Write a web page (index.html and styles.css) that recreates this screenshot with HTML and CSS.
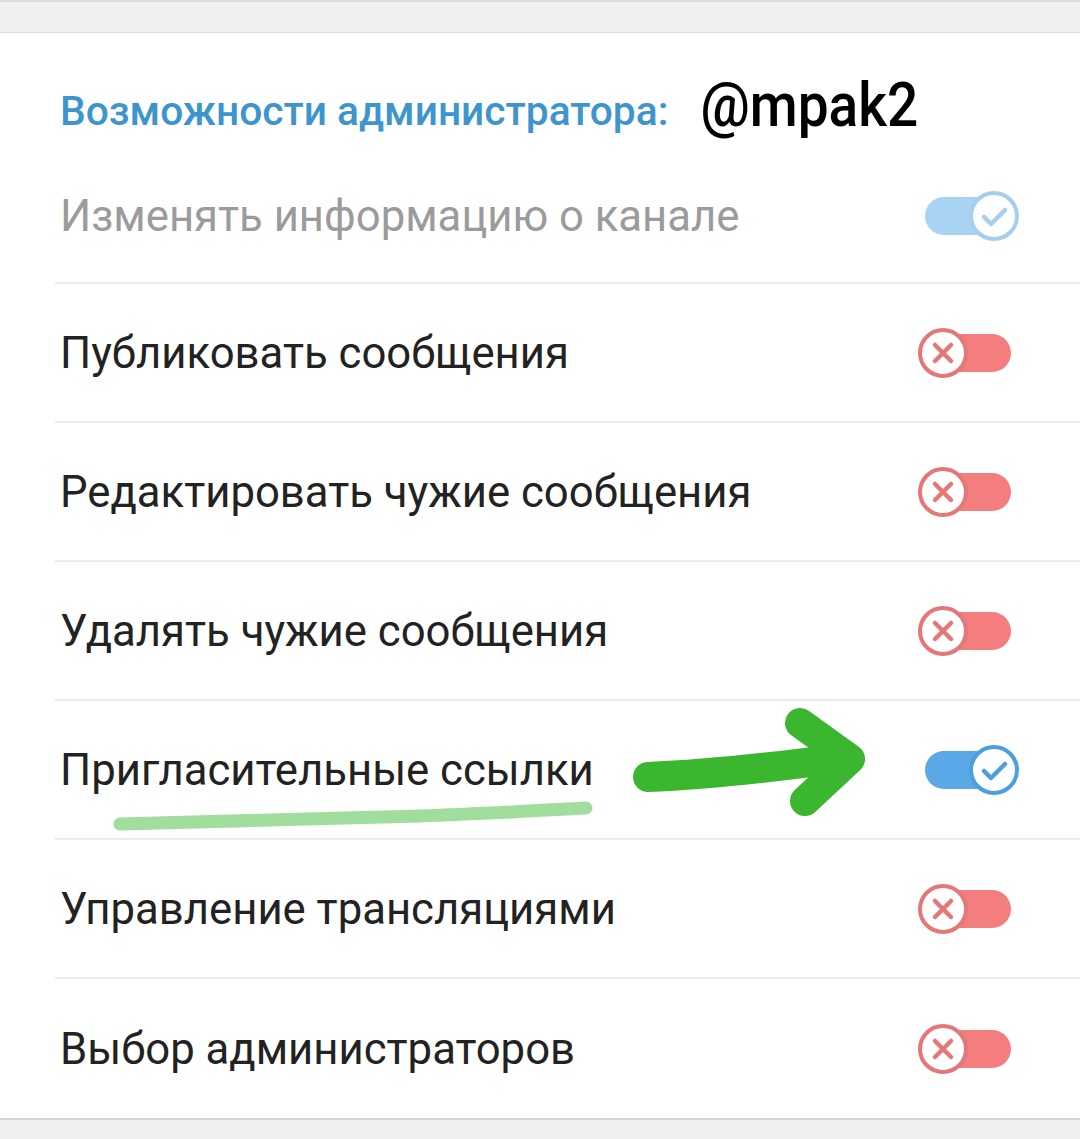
FILE: index.html
```html
<!DOCTYPE html>
<html lang="ru">
<head>
<meta charset="utf-8">
<link rel="stylesheet" href="styles.css">
</head>
<body>
<div class="topbar"></div>
<section class="card">
  <div class="header">
    <span class="title">Возможности администратора:</span>
    <span class="handle">@mpak2</span>
  </div>
  <div class="row first">
    <span class="label muted">Изменять информацию о канале</span>
    <span class="switch on dim"><span class="knob"><svg viewBox="0 0 50 50"><path d="M15 26 L22 33 L36 19"/></svg></span></span>
  </div>
  <div class="row">
    <span class="label">Публиковать сообщения</span>
    <span class="switch off"><span class="knob"><svg viewBox="0 0 50 50"><path d="M17 17 L33 33 M33 17 L17 33"/></svg></span></span>
  </div>
  <div class="row">
    <span class="label">Редактировать чужие сообщения</span>
    <span class="switch off"><span class="knob"><svg viewBox="0 0 50 50"><path d="M17 17 L33 33 M33 17 L17 33"/></svg></span></span>
  </div>
  <div class="row">
    <span class="label">Удалять чужие сообщения</span>
    <span class="switch off"><span class="knob"><svg viewBox="0 0 50 50"><path d="M17 17 L33 33 M33 17 L17 33"/></svg></span></span>
  </div>
  <div class="row marked">
    <span class="label">Пригласительные ссылки</span>
    <span class="switch on"><span class="knob"><svg viewBox="0 0 50 50"><path d="M15 26 L22 33 L36 19"/></svg></span></span>
    <svg class="annot" viewBox="0 0 1080 139" preserveAspectRatio="none">
      <path class="underline" d="M120 123 C220 120 320 118 420 115 C480 113 530 110 586 107"/>
      <path class="arrow" d="M648 76 C700 74 760 68 835 58 M800 22 L850 58 L805 100"/>
    </svg>
  </div>
  <div class="row">
    <span class="label">Управление трансляциями</span>
    <span class="switch off"><span class="knob"><svg viewBox="0 0 50 50"><path d="M17 17 L33 33 M33 17 L17 33"/></svg></span></span>
  </div>
  <div class="row last">
    <span class="label">Выбор администраторов</span>
    <span class="switch off"><span class="knob"><svg viewBox="0 0 50 50"><path d="M17 17 L33 33 M33 17 L17 33"/></svg></span></span>
  </div>
</section>
<div class="bottombar"></div>
</body>
</html>
```
FILE: styles.css
```css
html, body {
  margin: 0;
  padding: 0;
  background: #f0f0f0;
}
body {
  width: 1080px;
  height: 1139px;
  overflow: hidden;
  font-family: Roboto, "Noto Sans", sans-serif;
}
.topbar {
  height: 33px;
  background: #f0f0f0;
  border-top: 2px solid #dcdcdc;
  border-bottom: 1px solid #dadada;
  box-sizing: border-box;
}
.card {
  background: #ffffff;
  border-bottom: 2px solid #d6d6d6;
}
.header {
  height: 117px;
  display: flex;
  align-items: flex-start;
  padding-left: 60px;
  box-sizing: border-box;
}
.title {
  margin-top: 54px;
  font-size: 40.7px;
  font-weight: 500;
  color: #3e95cd;
}
.handle {
  display: inline-block;
  margin-top: 40px;
  margin-left: 32px;
  font-family: Roboto, sans-serif;
  font-weight: 500;
  font-size: 55px;
  color: #000;
  transform: scaleY(1.1);
  transform-origin: left center;
}
.row {
  position: relative;
  height: 139px;
  margin-left: 55px;
  border-bottom: 2px solid #ececec;
  box-sizing: border-box;
  display: flex;
  align-items: center;
  justify-content: space-between;
  padding-left: 5px;
  padding-right: 62px;
}
.row.first {
  height: 134px;
}
.row.last {
  border-bottom: none;
}
.label {
  font-size: 43.7px;
  color: #222222;
}
.label.muted {
  color: #9b9b9b;
}
.switch {
  position: relative;
  width: 93px;
  height: 50px;
  display: block;
}
.switch::before {
  content: "";
  position: absolute;
  top: 6px;
  height: 38px;
  border-radius: 19px;
}
.switch.on::before {
  left: 0;
  width: 76px;
  background: #5ba8e6;
}
.switch.off::before {
  left: 7px;
  width: 79px;
  background: #f47e7e;
}
.knob {
  position: absolute;
  top: 0;
  width: 50px;
  height: 50px;
  box-sizing: border-box;
  border-radius: 50%;
  background: #fff;
  border: 4px solid #4c9fdf;
}
.switch.on .knob { left: 44px; }
.switch.off .knob { left: -7px; border-color: #e57777; }
.knob svg {
  position: absolute;
  left: -4px;
  top: -4px;
  width: 50px;
  height: 50px;
}
.knob path {
  fill: none;
  stroke: #4c9fdf;
  stroke-width: 4.5px;
  stroke-linecap: round;
  stroke-linejoin: round;
}
.switch.off .knob path { stroke: #e57777; }
.switch.dim::before { background: #a9d3f5; }
.switch.dim .knob { border-color: #a6cfee; }
.switch.dim .knob path { stroke: #a6cfee; }
.annot {
  position: absolute;
  left: -55px;
  top: 0;
  width: 1080px;
  height: 139px;
  pointer-events: none;
}
.underline {
  fill: none;
  stroke: #a1dd9d;
  stroke-width: 13px;
  stroke-linecap: round;
}
.arrow {
  fill: none;
  stroke: #3bb72f;
  stroke-width: 30px;
  stroke-linecap: round;
  stroke-linejoin: round;
}
.bottombar {
  height: 23px;
  background: #f0f0f0;
}
```
